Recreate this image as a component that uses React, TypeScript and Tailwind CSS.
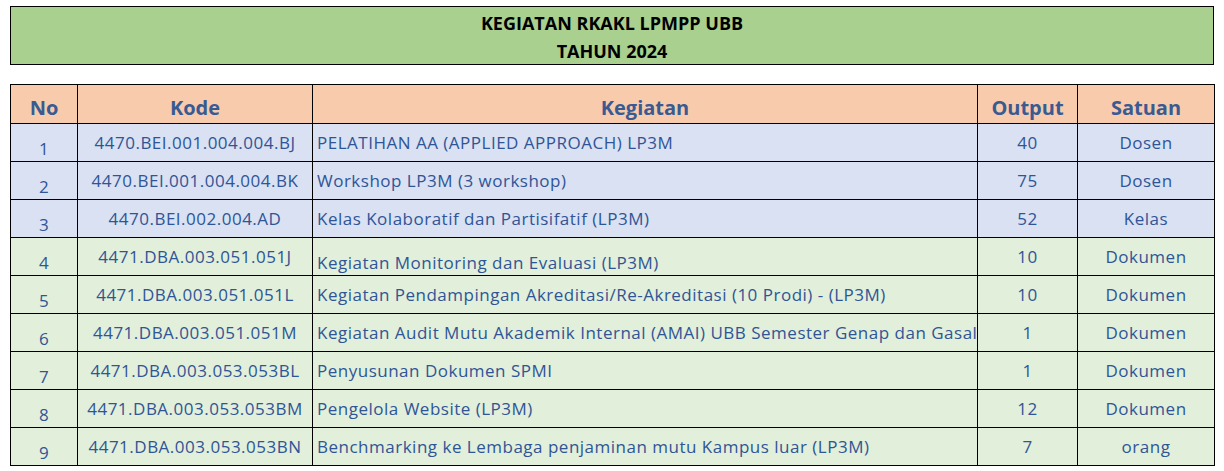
const rows = [
  { no: 1, kode: "4470.BEI.001.004.004.BJ", keg: "PELATIHAN AA (APPLIED APPROACH) LP3M", out: "40", sat: "Dosen", tone: "blue" },
  { no: 2, kode: "4470.BEI.001.004.004.BK", keg: "Workshop LP3M (3 workshop)", out: "75", sat: "Dosen", tone: "blue" },
  { no: 3, kode: "4470.BEI.002.004.AD", keg: "Kelas Kolaboratif dan Partisifatif (LP3M)", out: "52", sat: "Kelas", tone: "blue" },
  { no: 4, kode: "4471.DBA.003.051.051J", keg: "Kegiatan Monitoring dan Evaluasi (LP3M)", out: "10", sat: "Dokumen", tone: "green", kegBottom: true },
  { no: 5, kode: "4471.DBA.003.051.051L", keg: "Kegiatan Pendampingan Akreditasi/Re-Akreditasi (10 Prodi) - (LP3M)", out: "10", sat: "Dokumen", tone: "green" },
  { no: 6, kode: "4471.DBA.003.051.051M", keg: "Kegiatan Audit Mutu Akademik Internal (AMAI) UBB Semester Genap dan Gasal", out: "1", sat: "Dokumen", tone: "green" },
  { no: 7, kode: "4471.DBA.003.053.053BL", keg: "Penyusunan Dokumen SPMI", out: "1", sat: "Dokumen", tone: "green" },
  { no: 8, kode: "4471.DBA.003.053.053BM", keg: "Pengelola Website (LP3M)", out: "12", sat: "Dokumen", tone: "green" },
  { no: 9, kode: "4471.DBA.003.053.053BN", keg: "Benchmarking ke Lembaga penjaminan mutu Kampus luar (LP3M)", out: "7", sat: "orang", tone: "green" },
]

const cell = "border border-black px-1 h-[38px] overflow-hidden whitespace-nowrap"

export default function App() {
  return (
    <div className="min-h-[471px] bg-white pl-[10px] pr-[10px] pt-[6px] font-['Open_Sans',sans-serif] text-[#2f5597]">
      <div className="flex h-[59px] w-[1204px] flex-col items-center justify-center border border-black bg-[#a9d08e] pt-[2px] text-[18px] font-bold leading-[28px] text-black">
        <div>KEGIATAN RKAKL LPMPP UBB</div>
        <div>TAHUN 2024</div>
      </div>

      <table className="mt-[19px] w-[1204px] table-fixed border-collapse text-[17px] tracking-[0.5px]">
        <colgroup>
          <col className="w-[67px]" />
          <col className="w-[235px]" />
          <col className="w-[665px]" />
          <col className="w-[100px]" />
          <col className="w-[137px]" />
        </colgroup>
        <thead>
          <tr className="bg-[#f8cbad] text-[20px] font-bold tracking-normal text-[#3a5a92]">
            <th className="border border-black h-[39px] pt-[7px] align-middle">No</th>
            <th className="border border-black h-[39px] pt-[7px] align-middle">Kode</th>
            <th className="border border-black h-[39px] pt-[7px] align-middle">Kegiatan</th>
            <th className="border border-black h-[39px] pt-[7px] align-middle">Output</th>
            <th className="border border-black h-[39px] pt-[7px] align-middle">Satuan</th>
          </tr>
        </thead>
        <tbody>
          {rows.map((r) => (
            <tr key={r.no} className={r.tone === "blue" ? "bg-[#d9e1f2]" : "bg-[#e2efda]"}>
              <td className={`${cell} align-bottom text-center leading-[24px]`}>{r.no}</td>
              <td className={`${cell} text-center align-middle`}>{r.kode}</td>
              <td className={`${cell} ${r.kegBottom ? "align-bottom" : "align-middle"} pr-0 text-left leading-[24px]`}>
                <div className="overflow-hidden whitespace-nowrap">{r.keg}</div>
              </td>
              <td className={`${cell} text-center align-middle`}>{r.out}</td>
              <td className={`${cell} text-center align-middle`}>{r.sat}</td>
            </tr>
          ))}
        </tbody>
      </table>
    </div>
  )
}
